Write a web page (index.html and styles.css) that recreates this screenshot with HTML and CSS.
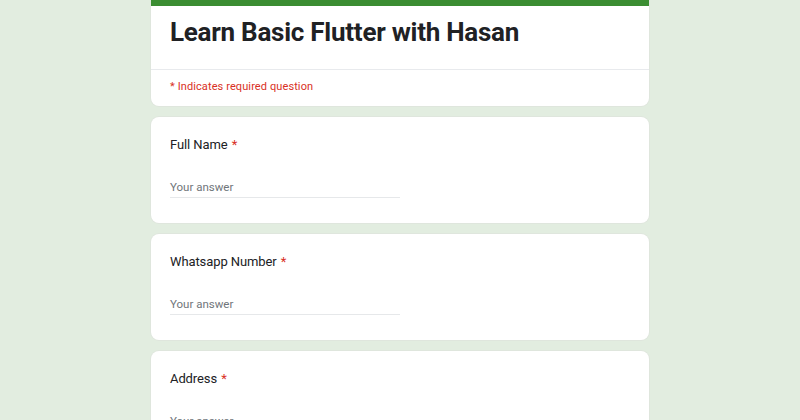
FILE: index.html
```html
<!DOCTYPE html>
<html>
<head>
<meta charset="utf-8">
<link rel="stylesheet" href="styles.css">
</head>
<body>
<div class="form">
  <div class="card header">
    <div class="title-wrap">
      <h1 class="title">Learn Basic Flutter with Hasan</h1>
    </div>
    <div class="required-note">* Indicates required question</div>
  </div>

  <div class="card question">
    <div class="label">Full Name <span class="star">*</span></div>
    <div class="answer">Your answer</div>
  </div>

  <div class="card question">
    <div class="label">Whatsapp Number <span class="star">*</span></div>
    <div class="answer">Your answer</div>
  </div>

  <div class="card question">
    <div class="label">Address <span class="star">*</span></div>
    <div class="answer">Your answer</div>
  </div>
</div>
</body>
</html>
```

FILE: styles.css
```css
html, body {
  margin: 0;
  padding: 0;
}
body {
  background: #e2ede0;
  font-family: Roboto, "Liberation Sans", sans-serif;
  height: 420px;
  overflow: hidden;
}
.form {
  width: 498px;
  margin: 0 auto;
  display: flex;
  flex-direction: column;
  gap: 11px;
}
.card {
  background: #fff;
  border-radius: 8px;
  box-shadow: 0 0 0 1px #dfe6dd;
}
.header {
  border-top: 6px solid #3b8d32;
  border-radius: 0 0 8px 8px;
}
.title-wrap {
  padding: 12px 19px 0;
  height: 51px;
  border-bottom: 1px solid #e8eaed;
}
.title {
  margin: 0;
  font-family: Roboto, "Liberation Sans", sans-serif;
  font-weight: 700;
  font-size: 26px;
  line-height: 28px;
  color: #202124;
  letter-spacing: -0.25px;
}
.required-note {
  padding: 10px 19px 0;
  height: 26px;
  font-size: 11px;
  line-height: 14px;
  color: #d93025;
  letter-spacing: 0.1px;
}
.question {
  height: 106px;
  padding: 19px 19px 0;
  box-sizing: border-box;
}
.label {
  font-size: 13px;
  line-height: 18px;
  color: #202124;
  letter-spacing: -0.1px;
}
.star {
  color: #d93025;
  margin-left: 1px;
}
.answer {
  margin-top: 26px;
  width: 230px;
  font-size: 11.5px;
  line-height: 15px;
  color: #70757a;
  padding-bottom: 2px;
  border-bottom: 1px solid #e6e8ea;
}
```
